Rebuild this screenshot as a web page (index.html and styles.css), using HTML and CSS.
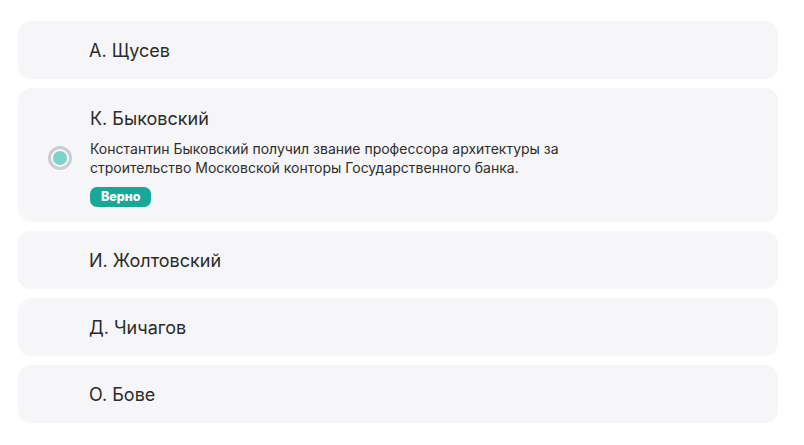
FILE: index.html
```html
<!DOCTYPE html>
<html lang="ru">
<head>
<meta charset="utf-8">
<link rel="stylesheet" href="styles.css">
</head>
<body>
<div class="list">
  <div class="option"><div class="body"><div class="title">А. Щусев</div></div></div>
  <div class="option open">
    <div class="radio"><span class="dot"></span></div>
    <div class="body">
      <div class="title">К. Быковский</div>
      <p class="desc">Константин Быковский получил звание профессора архитектуры за<br>строительство Московской конторы Государственного банка.</p>
      <span class="badge">Верно</span>
    </div>
  </div>
  <div class="option"><div class="body"><div class="title">И. Жолтовский</div></div></div>
  <div class="option"><div class="body"><div class="title">Д. Чичагов</div></div></div>
  <div class="option"><div class="body"><div class="title">О. Бове</div></div></div>
</div>
</body>
</html>
```
FILE: styles.css
```css
* { box-sizing: border-box; }
html, body { margin: 0; padding: 0; background: #fff; }
body { font-family: Inter, "Liberation Sans", sans-serif; color: #2b2b2b; }
.list {
  display: flex;
  flex-direction: column;
  gap: 9px;
  padding: 21px 26px 0 18px;
}
.option {
  background: #f6f6f8;
  border-radius: 13px;
  min-height: 58px;
  display: flex;
  align-items: center;
  padding-left: 71px;
  padding-top: 1px;
  position: relative;
}
.option.open {
  padding: 20px 20px 15px 30px;
  gap: 18px;
}
.body { display: flex; flex-direction: column; align-items: flex-start; }
.title { font-size: 18px; line-height: 22px; }
.desc {
  margin: 9px 0 0;
  font-size: 14px;
  line-height: 19px;
  color: #2e2e2e;
}
.badge {
  margin-top: 10px;
  background: #17a897;
  color: #fff;
  font-weight: 800;
  font-size: 12.5px;
  line-height: 20px;
  height: 20px;
  padding: 0 11px;
  border-radius: 7px;
}
.radio {
  width: 24px; height: 24px;
  border-radius: 50%;
  border: 3px solid #cbccd4;
  display: flex; align-items: center; justify-content: center;
  flex: none;
}
.dot {
  width: 14px; height: 14px; border-radius: 50%;
  background: #7dd3ca;
}
```
